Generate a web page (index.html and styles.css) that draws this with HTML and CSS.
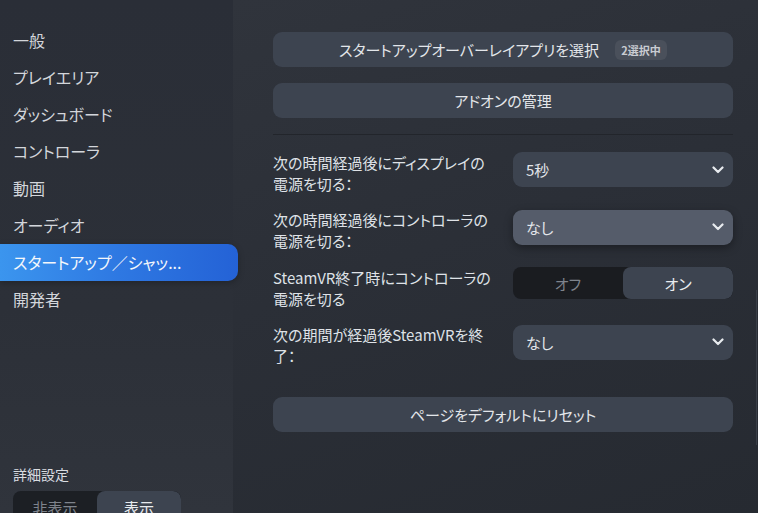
FILE: index.html
```html
<!DOCTYPE html>
<html lang="ja">
<head>
<meta charset="utf-8">
<title>スタートアップ／シャットダウン</title>
<link rel="stylesheet" href="styles.css">
</head>
<body>
<div class="app">
  <nav class="sidebar">
    <ul class="nav">
      <li class="nav-item">一般</li>
      <li class="nav-item">プレイエリア</li>
      <li class="nav-item">ダッシュボード</li>
      <li class="nav-item">コントローラ</li>
      <li class="nav-item">動画</li>
      <li class="nav-item">オーディオ</li>
      <li class="nav-item active">スタートアップ／シャッ...</li>
      <li class="nav-item">開発者</li>
    </ul>
    <div class="advanced">
      <div class="advanced-title">詳細設定</div>
      <div class="seg small">
        <span class="seg-opt">非表示</span>
        <span class="seg-opt on">表示</span>
      </div>
    </div>
  </nav>
  <main class="content">
    <button class="wide-btn">スタートアップオーバーレイアプリを選択<span class="badge">2選択中</span></button>
    <button class="wide-btn">アドオンの管理</button>
    <hr class="sep">
    <div class="rows">
      <div class="row">
        <div class="label">次の時間経過後にディスプレイの<br>電源を切る：</div>
        <div class="select"><span>5秒</span><svg class="chev" viewBox="0 0 12 8" width="12" height="8"><path d="M1.5 1.5 L6 6 L10.5 1.5" fill="none" stroke="#e8ebef" stroke-width="2.2" stroke-linecap="round" stroke-linejoin="round"/></svg></div>
      </div>
      <div class="row">
        <div class="label">次の時間経過後にコントローラの<br>電源を切る：</div>
        <div class="select hover"><span>なし</span><svg class="chev" viewBox="0 0 12 8" width="12" height="8"><path d="M1.5 1.5 L6 6 L10.5 1.5" fill="none" stroke="#e8ebef" stroke-width="2.2" stroke-linecap="round" stroke-linejoin="round"/></svg></div>
      </div>
      <div class="row">
        <div class="label">SteamVR終了時にコントローラの<br>電源を切る</div>
        <div class="seg big">
          <span class="seg-opt">オフ</span>
          <span class="seg-opt on">オン</span>
        </div>
      </div>
      <div class="row">
        <div class="label">次の期間が経過後SteamVRを終<br>了：</div>
        <div class="select"><span>なし</span><svg class="chev" viewBox="0 0 12 8" width="12" height="8"><path d="M1.5 1.5 L6 6 L10.5 1.5" fill="none" stroke="#e8ebef" stroke-width="2.2" stroke-linecap="round" stroke-linejoin="round"/></svg></div>
      </div>
    </div>
    <button class="wide-btn reset">ページをデフォルトにリセット</button>
  </main>
  <div class="scrollbar"></div>
</div>
</body>
</html>
```
FILE: styles.css
```css
* { box-sizing: border-box; }
html, body {
  margin: 0;
  padding: 0;
  width: 758px;
  height: 513px;
  overflow: hidden;
  background: #2b2f37;
}
body {
  font-family: "Noto Sans CJK JP", "Noto Sans", sans-serif;
  font-feature-settings: "palt";
  color: #dfe2e7;
}
.app {
  position: relative;
  display: flex;
  height: 513px;
}
.sidebar {
  flex: 0 0 233px;
  width: 233px;
  min-width: 0;
  display: flex;
  flex-direction: column;
  padding-top: 22px;
  background: linear-gradient(180deg, #2a2e37 0%, #2c3038 60%, #30343c 100%);
  position: relative;
  z-index: 1;
}
.nav {
  list-style: none;
  margin: 0;
  padding: 0;
}
.nav-item {
  height: 37px;
  line-height: 37px;
  padding-left: 13px;
  font-size: 16px;
  color: #d3d6db;
  white-space: nowrap;
}
.nav-item.active {
  width: 238px;
  color: #f4f7fb;
  background: linear-gradient(90deg, #3b95ee 0%, #2e78e2 50%, #2462d6 100%);
  border-radius: 0 10px 10px 0;
  box-shadow: 0 2px 6px rgba(0,0,0,0.25);
}
.advanced {
  margin-top: auto;
  padding-left: 13px;
  margin-bottom: -10px;
}
.advanced-title {
  font-size: 14px;
  line-height: 20px;
  color: #dadde2;
  margin-bottom: 7px;
}
.seg {
  display: flex;
  border-radius: 8px;
  background: #1c1f24;
  overflow: hidden;
}
.seg.small {
  width: 168px;
  height: 32px;
}
.seg-opt {
  flex: 1;
  display: flex;
  align-items: center;
  justify-content: center;
  color: #7e838c;
  font-size: 15px;
}
.seg-opt.on {
  background: #3d4450;
  color: #e8ebef;
  border-radius: 8px;
}
.content {
  flex: 1;
  min-width: 0;
  padding: 32px 25px 0 40px;
  display: flex;
  flex-direction: column;
  background: linear-gradient(160deg, #30343c 0%, #2b2f37 45%, #262a31 100%);
}
.wide-btn {
  display: flex;
  align-items: center;
  justify-content: center;
  width: 460px;
  height: 35px;
  border: 0;
  border-radius: 9px;
  background: #3d4450;
  color: #e3e6ea;
  font-family: inherit;
  font-feature-settings: "palt";
  font-size: 15px;
  padding: 0;
  margin: 0 0 16px 0;
}
.badge {
  display: inline-flex;
  align-items: center;
  justify-content: center;
  width: 52px;
  height: 20px;
  margin-left: 16px;
  border-radius: 6px;
  background: #4a505b;
  color: #c9ccd2;
  font-size: 11px;
  font-weight: 700;
}
.sep {
  width: 460px;
  margin: 0 0 17px 0;
  border: 0;
  height: 1px;
  background: #22252b;
}
.rows {
  display: flex;
  flex-direction: column;
  gap: 16px;
  margin-bottom: 31px;
}
.row {
  display: flex;
  align-items: flex-start;
  width: 460px;
}
.label {
  flex: 0 0 240px;
  white-space: nowrap;
  font-size: 15px;
  line-height: 21px;
  color: #dfe2e7;
  margin-top: -0.5px;
}
.select {
  flex: 1;
  height: 35px;
  display: flex;
  align-items: center;
  justify-content: space-between;
  padding: 0 9px 0 13px;
  border-radius: 9px;
  background: #3d4450;
  color: #e3e6ea;
  font-size: 15px;
}
.select.hover {
  background: #555c6a;
  box-shadow: 0 3px 8px rgba(0,0,0,0.35);
}
.chev { display: block; }
.seg.big {
  flex: 1;
  height: 32px;
  background: #1a1c20;
}
.seg.big .seg-opt { font-size: 15px; }
.reset { margin-bottom: 0; }
.scrollbar {
  position: absolute;
  right: 1px;
  top: 290px;
  width: 1px;
  height: 155px;
  background: #3a3f48;
}
```
